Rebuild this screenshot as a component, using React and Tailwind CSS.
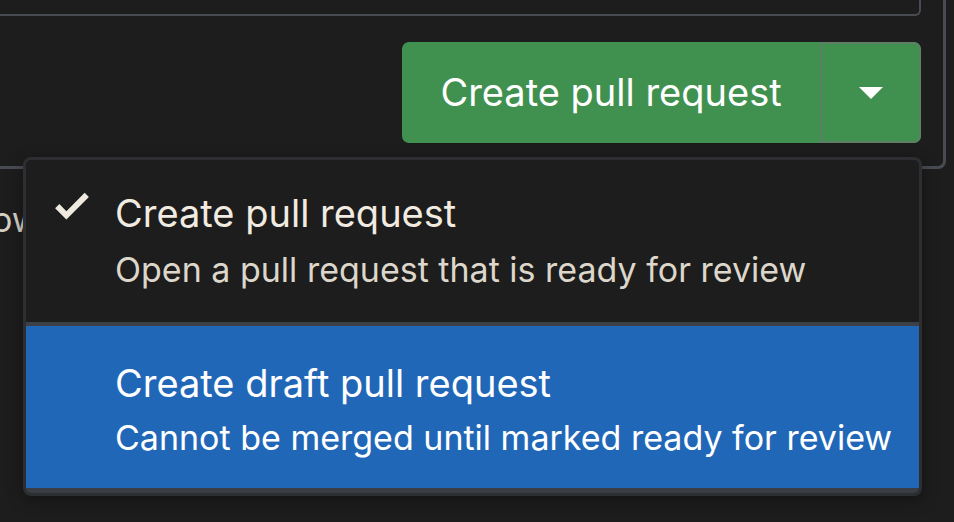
import React from 'react';

const CheckIcon = () => (
  <svg width="34" height="45" viewBox="0 0 12 16" className="shrink-0 -mt-[8px]" fill="#efe9df">
    <path d="M12 5l-8 8-4-4 1.5-1.5L4 10l6.5-6.5L12 5z" />
  </svg>
);

const MenuItem = ({ checked, title, desc, active, top, gap }) => (
  <div
    className={`flex items-start pl-[29px] h-[162px] ${top} ${active ? 'h-[161px] bg-[#2167b8] text-white' : 'text-[#f1ebe1]'}`}
  >
    {checked ? <CheckIcon /> : <div className="w-[34px] shrink-0" />}
    <div className="ml-[26px] whitespace-nowrap">
      <div className="text-[38px] leading-[44px]">{title}</div>
      <div className={`${gap} text-[34px] leading-[40px] ${active ? 'text-white' : 'text-[#ddd6ca]'}`}>{desc}</div>
    </div>
  </div>
);

export default function App() {
  return (
    <div className="relative h-[522px] w-[954px] overflow-hidden bg-[#1c1d1c]" style={{ fontFamily: 'Inter, "Noto Sans", sans-serif' }}>
      <div className="flex h-[169px] w-[946px] flex-col rounded-br-[8px] border-r-[3px] border-b-[3px] border-[#484b52]">
        <div className="h-[16px] w-[921px] rounded-br-[6px] border-r-2 border-b-2 border-[#484b52]" />
        <div className="mt-[26px] flex justify-end pr-[22px]">
          <div className="flex h-[101px] overflow-hidden rounded-[7px] bg-[#409150]">
            <button className="flex w-[418px] items-center justify-center text-[38px] text-white">
              Create pull request
            </button>
            <button className="flex w-[101px] items-center justify-center rounded-r-[7px] border-2 border-[#5d7f66]">
              <svg width="24" height="12" viewBox="0 0 24 12">
                <path d="M0 0h24L12 12z" fill="#fff" />
              </svg>
            </button>
          </div>
        </div>
      </div>

      <div className="-ml-[48px] mt-[31px] text-[34px] leading-[40px] text-[#d5cfc4] whitespace-nowrap">
        Allow edits by maintainers
      </div>

      <div className="absolute left-[23px] top-[157px] w-[899px] overflow-hidden rounded-[8px] border-[3px] border-[#2c2e31] bg-[#1c1d1c] shadow-[0_4px_16px_rgba(0,0,0,0.35)]">
        <MenuItem checked top="pt-[31px]" gap="mt-[15px]" title="Create pull request" desc="Open a pull request that is ready for review" />
        <div className="border-t-4 border-[#3c4047]">
          <MenuItem active top="pt-[35px]" gap="mt-[13px]" title="Create draft pull request" desc="Cannot be merged until marked ready for review" />
        </div>
        <div className="h-[5px] bg-[#3a3d43]" />
      </div>
    </div>
  );
}
